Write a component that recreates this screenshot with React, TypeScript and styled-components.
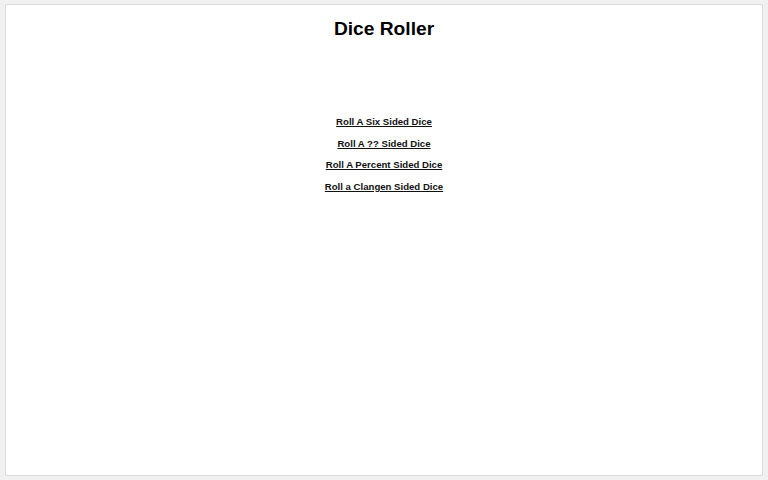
import React from 'react';
import styled, { createGlobalStyle } from 'styled-components';

const GlobalStyle = createGlobalStyle`
  html, body {
    margin: 0;
    padding: 0;
    background: #f1f1f1;
    font-family: "Liberation Sans", Arial, sans-serif;
  }
`;

const Page = styled.div`
  padding: 4px 5px 4px 5px;
  height: 480px;
  box-sizing: border-box;
`;

const Panel = styled.main`
  height: 472px;
  box-sizing: border-box;
  background: #fff;
  border: 1px solid #dcdcdc;
  display: flex;
  flex-direction: column;
  align-items: center;
`;

const Title = styled.h1`
  margin: 13px 0 0;
  font-size: 19.2px;
  line-height: 22px;
  font-weight: bold;
  color: #000;
`;

const RollList = styled.nav`
  margin-top: 76px;
  display: flex;
  flex-direction: column;
  align-items: center;
  gap: 10.6px;
`;

const RollLink = styled.a`
  font-size: 9.6px;
  line-height: 11px;
  font-weight: bold;
  color: #111;
  text-decoration: underline;
  cursor: pointer;
`;

const dice = [
  'Roll A Six Sided Dice',
  'Roll A ?? Sided Dice',
  'Roll A Percent Sided Dice',
  'Roll a Clangen Sided Dice',
];

const App: React.FC = () => {
  return (
    <>
      <GlobalStyle />
      <Page>
        <Panel>
          <Title>Dice Roller</Title>
          <RollList>
            {dice.map((label) => (
              <RollLink key={label} href="#">
                {label}
              </RollLink>
            ))}
          </RollList>
        </Panel>
      </Page>
    </>
  );
};

export default App;
